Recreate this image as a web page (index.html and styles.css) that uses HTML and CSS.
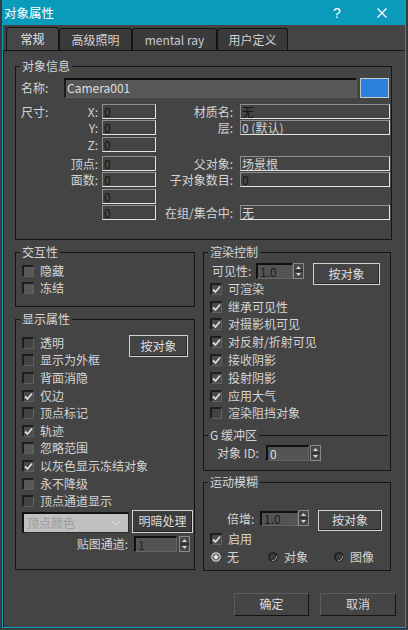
FILE: index.html
```html
<!DOCTYPE html>
<html lang="zh-CN">
<head>
<meta charset="utf-8">
<title>对象属性</title>
<link rel="stylesheet" href="styles.css">
</head>
<body>
<div class="win">
  <div class="titlebar">
    <span class="ttl">对象属性</span>
    <span class="help">?</span>
    <svg class="close" viewBox="0 0 10 10" width="10" height="10"><path d="M0.5 0.5 L9.5 9.5 M9.5 0.5 L0.5 9.5" stroke="#fff" stroke-width="1.3" fill="none"/></svg>
  </div>
  <div class="tabs">
    <div class="tab t1 active">常规</div>
    <div class="tab t2">高级照明</div>
    <div class="tab t3">mental ray</div>
    <div class="tab t4">用户定义</div>
  </div>
  <div class="panel">
    <div class="group g-info">
      <div class="gt">对象信息</div>
      <div class="name-row">
        <span class="nlbl">名称:</span>
        <div class="namebox">Camera001</div>
        <div class="swatch"></div>
      </div>
      <div class="info">
        <div class="l size"><span>尺寸:</span><span>X:</span></div>
        <div class="box">0</div>
        <div class="l r">材质名:</div>
        <div class="box">无</div>

        <div class="l">Y:</div>
        <div class="box">0</div>
        <div class="l r">层:</div>
        <div class="box lt">0 (默认)</div>

        <div class="l">Z:</div>
        <div class="box">0</div>
        <div></div>
        <div></div>

        <div class="l">顶点:</div>
        <div class="box">0</div>
        <div class="l r">父对象:</div>
        <div class="box lt">场景根</div>

        <div class="l">面数:</div>
        <div class="box">0</div>
        <div class="l r">子对象数目:</div>
        <div class="box">0</div>

        <div></div>
        <div class="box">0</div>
        <div></div>
        <div></div>

        <div></div>
        <div class="box">0</div>
        <div class="l r">在组/集合中:</div>
        <div class="box lt">无</div>
      </div>
    </div>

    <div class="cols">
      <div class="colL">
        <div class="group g-inter">
          <div class="gt">交互性</div>
          <div class="rows">
            <div class="cr"><span class="cb"></span><span>隐藏</span></div>
            <div class="cr"><span class="cb"></span><span>冻结</span></div>
          </div>
        </div>

        <div class="group g-disp">
          <div class="gt">显示属性</div>
          <div class="rows">
            <div class="cr"><span class="cb dim"></span><span>透明</span><button class="btn obj1">按对象</button></div>
            <div class="cr"><span class="cb dim"></span><span>显示为外框</span></div>
            <div class="cr"><span class="cb dim"></span><span>背面消隐</span></div>
            <div class="cr"><span class="cb on"><svg viewBox="0 0 9 9" width="9" height="9"><path d="M1 4.5 L3.5 7 L8 1.5" fill="none" stroke="#dcdcdc" stroke-width="1.8"/></svg></span><span>仅边</span></div>
            <div class="cr"><span class="cb dim"></span><span>顶点标记</span></div>
            <div class="cr"><span class="cb on"><svg viewBox="0 0 9 9" width="9" height="9"><path d="M1 4.5 L3.5 7 L8 1.5" fill="none" stroke="#dcdcdc" stroke-width="1.8"/></svg></span><span>轨迹</span></div>
            <div class="cr"><span class="cb"></span><span>忽略范围</span></div>
            <div class="cr"><span class="cb on"><svg viewBox="0 0 9 9" width="9" height="9"><path d="M1 4.5 L3.5 7 L8 1.5" fill="none" stroke="#dcdcdc" stroke-width="1.8"/></svg></span><span>以灰色显示冻结对象</span></div>
            <div class="cr"><span class="cb"></span><span>永不降级</span></div>
            <div class="cr"><span class="cb dim"></span><span>顶点通道显示</span></div>
          </div>
          <div class="ddrow">
            <div class="dd"><span>顶点颜色</span><svg viewBox="0 0 10 6" width="10" height="6"><path d="M1 1 L5 5 L9 1" fill="none" stroke="#e6e6e6" stroke-width="1"/></svg></div>
            <button class="btn shade">明暗处理</button>
          </div>
          <div class="texrow">
            <span class="texlbl">贴图通道:</span>
            <div class="sp tex">1</div>
            <svg class="arr" viewBox="0 0 11 16" width="11" height="16"><rect x="0.5" y="0.5" width="10" height="15" fill="#474747" stroke="#8a8a8a"/><line x1="1" y1="8" x2="10" y2="8" stroke="#1e1e1e"/><path d="M3 6 L5.5 3 L8 6Z" fill="#d4d4d4"/><path d="M3 10 L5.5 13 L8 10Z" fill="#d4d4d4"/></svg>
          </div>
        </div>
      </div>

      <div class="colR">
        <div class="group g-render">
          <div class="gt">渲染控制</div>
          <div class="visrow">
            <span class="vislbl">可见性:</span>
            <div class="sp vis">1.0</div>
            <svg class="arr" viewBox="0 0 11 16" width="11" height="16"><rect x="0.5" y="0.5" width="10" height="15" fill="#474747" stroke="#8a8a8a"/><line x1="1" y1="8" x2="10" y2="8" stroke="#1e1e1e"/><path d="M3 6 L5.5 3 L8 6Z" fill="#d4d4d4"/><path d="M3 10 L5.5 13 L8 10Z" fill="#d4d4d4"/></svg>
            <button class="btn obj2">按对象</button>
          </div>
          <div class="rows">
            <div class="cr tall"><span class="cb on"><svg viewBox="0 0 9 9" width="9" height="9"><path d="M1 4.5 L3.5 7 L8 1.5" fill="none" stroke="#dcdcdc" stroke-width="1.8"/></svg></span><span>可渲染</span></div>
            <div class="cr tall"><span class="cb on"><svg viewBox="0 0 9 9" width="9" height="9"><path d="M1 4.5 L3.5 7 L8 1.5" fill="none" stroke="#dcdcdc" stroke-width="1.8"/></svg></span><span>继承可见性</span></div>
            <div class="cr tall"><span class="cb on"><svg viewBox="0 0 9 9" width="9" height="9"><path d="M1 4.5 L3.5 7 L8 1.5" fill="none" stroke="#dcdcdc" stroke-width="1.8"/></svg></span><span>对摄影机可见</span></div>
            <div class="cr tall"><span class="cb on"><svg viewBox="0 0 9 9" width="9" height="9"><path d="M1 4.5 L3.5 7 L8 1.5" fill="none" stroke="#dcdcdc" stroke-width="1.8"/></svg></span><span>对反射/折射可见</span></div>
            <div class="cr tall"><span class="cb on"><svg viewBox="0 0 9 9" width="9" height="9"><path d="M1 4.5 L3.5 7 L8 1.5" fill="none" stroke="#dcdcdc" stroke-width="1.8"/></svg></span><span>接收阴影</span></div>
            <div class="cr tall"><span class="cb on"><svg viewBox="0 0 9 9" width="9" height="9"><path d="M1 4.5 L3.5 7 L8 1.5" fill="none" stroke="#dcdcdc" stroke-width="1.8"/></svg></span><span>投射阴影</span></div>
            <div class="cr tall"><span class="cb on"><svg viewBox="0 0 9 9" width="9" height="9"><path d="M1 4.5 L3.5 7 L8 1.5" fill="none" stroke="#dcdcdc" stroke-width="1.8"/></svg></span><span>应用大气</span></div>
            <div class="cr tall"><span class="cb dim"></span><span>渲染阻挡对象</span></div>
          </div>
          <div class="gdiv">
            <div class="gt">G 缓冲区</div>
            <div class="idrow">
              <span class="idlbl">对象 ID:</span>
              <div class="sp oid">0</div>
              <svg class="arr" viewBox="0 0 11 16" width="11" height="16"><rect x="0.5" y="0.5" width="10" height="15" fill="#474747" stroke="#8a8a8a"/><line x1="1" y1="8" x2="10" y2="8" stroke="#1e1e1e"/><path d="M3 6 L5.5 3 L8 6Z" fill="#d4d4d4"/><path d="M3 10 L5.5 13 L8 10Z" fill="#d4d4d4"/></svg>
            </div>
          </div>
        </div>

        <div class="group g-motion">
          <div class="gt">运动模糊</div>
          <div class="mulrow">
            <span class="mullbl">倍增:</span>
            <div class="sp mul">1.0</div>
            <svg class="arr" viewBox="0 0 11 16" width="11" height="16"><rect x="0.5" y="0.5" width="10" height="15" fill="#474747" stroke="#8a8a8a"/><line x1="1" y1="8" x2="10" y2="8" stroke="#1e1e1e"/><path d="M3 6 L5.5 3 L8 6Z" fill="#d4d4d4"/><path d="M3 10 L5.5 13 L8 10Z" fill="#d4d4d4"/></svg>
            <button class="btn obj3">按对象</button>
          </div>
          <div class="cr tall"><span class="cb on"><svg viewBox="0 0 9 9" width="9" height="9"><path d="M1 4.5 L3.5 7 L8 1.5" fill="none" stroke="#dcdcdc" stroke-width="1.8"/></svg></span><span>启用</span></div>
          <div class="radrow">
            <div class="ri r1"><svg viewBox="0 0 10 10" width="10" height="10"><circle cx="5" cy="5" r="4.2" fill="#6e6e6e" stroke="#c8c8c8" stroke-width="1.2"/><circle cx="5" cy="5" r="1.9" fill="#f2f2f2"/></svg><span>无</span></div>
            <div class="ri r2"><svg viewBox="0 0 10 10" width="10" height="10"><circle cx="5" cy="5" r="4.2" fill="#3a3a3a" stroke="#1a1a1a" stroke-width="1.3"/><path d="M8.6 3.8 A4 4 0 0 1 3.8 8.6" stroke="#a0a0a0" fill="none" stroke-width="1"/></svg><span>对象</span></div>
            <div class="ri r3"><svg viewBox="0 0 10 10" width="10" height="10"><circle cx="5" cy="5" r="4.2" fill="#3a3a3a" stroke="#1a1a1a" stroke-width="1.3"/><path d="M8.6 3.8 A4 4 0 0 1 3.8 8.6" stroke="#a0a0a0" fill="none" stroke-width="1"/></svg><span>图像</span></div>
          </div>
        </div>
      </div>
    </div>

    <div class="foot">
      <button class="fbtn ok">确定</button>
      <button class="fbtn cancel">取消</button>
    </div>
  </div>
</div>
</body>
</html>
```

FILE: styles.css
```css
* { box-sizing: border-box; }
html, body { margin: 0; padding: 0; }
body {
  background: #3a3a3a;
  width: 408px;
  height: 630px;
  overflow: hidden;
  font-family: "Noto Sans CJK SC", "Noto Sans", sans-serif;
  font-size: 12px;
  color: #d4d4d4;
}

.win {
  margin-left: 2px;
  width: 404px;
  height: 628px;
  background: #444444;
  border: 1px solid #0a9aba;
  border-top: 0;
  display: flex;
  flex-direction: column;
}

.titlebar {
  height: 25px;
  flex: none;
  background: #0a9aba;
  display: flex;
  align-items: center;
  padding: 0 18px 0 1px;
  color: #ffffff;
}
.ttl { font-size: 12.5px; line-height: 14px; }
.help {
  margin-left: auto;
  width: 14px;
  text-align: center;
  font-family: "Liberation Sans", sans-serif;
  font-size: 14px;
  line-height: 16px;
}
.close { margin-left: 33px; display: block; }

.tabs {
  height: 25px;
  flex: none;
  display: flex;
  align-items: flex-end;
  padding-left: 3px;
}
.tab {
  height: 22px;
  border: 1px solid #141414;
  border-bottom: 0;
  border-radius: 3px 3px 0 0;
  background: #3a3a3a;
  display: flex;
  align-items: center;
  justify-content: center;
  color: #d2d2d2;
  line-height: 14px;
}
.tab.active { height: 23px; background: #464646; color: #e6e6e6; }
.t1 { width: 53px; }
.t2 { width: 73px; }
.t3 { width: 85px; color: #c8ccd4; }
.t4 { width: 71px; }

.panel {
  flex: 1;
  border-top: 1px solid #141414;
  border-left: 1px solid #141414;
}

.group { border: 1px solid #151515; }
.gt {
  width: fit-content;
  height: 14px;
  line-height: 14px;
  margin: -8px 0 0 4px;
  padding: 0 2px;
  background: #444444;
  color: #d6d6d6;
}

.g-info { margin: 15px 0 0 11px; width: 377px; padding-bottom: 19px; }
.name-row { display: flex; margin-top: 5px; padding-left: 5px; height: 20px; }
.nlbl { width: 43px; line-height: 20px; }
.namebox {
  width: 293px;
  height: 20px;
  background: #575757;
  border-style: solid;
  border-width: 2px 1px 1px 2px;
  border-color: #0e0e0e #5e5e5e #5e5e5e #1c1c1c;
  padding-left: 1px;
  line-height: 16px;
  color: #dedede;
}
.swatch {
  width: 29px;
  height: 20px;
  margin-left: 3px;
  background: #2b80dc;
  border: 1px solid #c8c8c8;
}

.info {
  display: grid;
  grid-template-columns: 86px 54px 84px 150px;
  grid-template-rows: 16px 17px 19px 16px 17px 16px 15px;
  margin-top: 6px;
}
.l {
  height: 15px;
  display: flex;
  align-items: center;
  justify-content: flex-end;
  padding-right: 4px;
  line-height: 15px;
  white-space: nowrap;
}
.l.r { padding-right: 7px; }
.l.size { justify-content: space-between; padding-left: 5px; }
.box {
  height: 15px;
  border: 1px solid;
  border-color: #8e8e8e #e4e4e4 #e4e4e4 #8e8e8e;
  line-height: 13px;
  padding-left: 1px;
  color: #151515;
  overflow: hidden;
  white-space: nowrap;
}
.box.lt { color: #d2d2d2; }

.cols {
  display: flex;
  gap: 8px;
  margin: 12px 0 0 11px;
  align-items: flex-start;
}
.colL { width: 180px; display: flex; flex-direction: column; }
.colR { width: 188px; display: flex; flex-direction: column; }

.cr {
  height: 17.6px;
  display: flex;
  align-items: center;
  padding-left: 6px;
  line-height: 14px;
  white-space: nowrap;
}
.cr.tall { height: 17.8px; }
.cb {
  width: 12px;
  height: 12px;
  flex: none;
  margin-right: 6px;
  border-style: solid;
  border-width: 2px 1px 1px 2px;
  border-color: #1e1e1e #606060 #606060 #1e1e1e;
  background: #585858;
  display: flex;
  align-items: center;
  justify-content: center;
}
.cb.dim { background: #434343; }
.cb.on { background: #4a4a4a; }
.cb svg { display: block; }

.g-inter { padding-bottom: 8.8px; }
.g-inter .rows { margin-top: 3px; }

.g-disp { margin-top: 12px; padding-bottom: 17px; }
.g-disp .rows { margin-top: 8px; }

.btn {
  font: inherit;
  margin: 0;
  padding: 0;
  background: #444444;
  border: 1px solid #d2d2d2;
  box-shadow: inset -1px -1px 0 #262626;
  color: #dedede;
  display: flex;
  align-items: center;
  justify-content: center;
  line-height: 14px;
}
.obj1 {
  margin-left: auto;
  margin-right: 6px;
  align-self: flex-start;
  margin-top: 1px;
  width: 59px;
  height: 22px;
  flex: none;
}

.ddrow {
  display: flex;
  align-items: flex-end;
  height: 23px;
  padding-left: 6px;
}
.dd {
  width: 107px;
  height: 21px;
  background: #c0c0c0;
  border-style: solid;
  border-width: 2px 1px 1px 2px;
  border-color: #121212 #2a2a2a #2a2a2a #121212;
  color: #9c9c9c;
  display: flex;
  align-items: center;
  justify-content: space-between;
  padding: 0 7px 0 3px;
  line-height: 14px;
}
.dd svg { display: block; }
.shade {
  margin-left: 3px;
  width: 61px;
  height: 23px;
  background: #3c3c3c;
}

.texrow { display: flex; margin-top: 3px; height: 16px; }
.texlbl { width: 112px; text-align: right; line-height: 16px; }
.sp {
  height: 16px;
  background: #545454;
  border-style: solid;
  border-width: 2px 1px 1px 2px;
  border-color: #101010 #646464 #646464 #101010;
  line-height: 13px;
  padding-left: 2px;
  color: #1c1c1c;
}
.tex { margin-left: 6px; width: 43px; color: #1c2230; }
.arr { display: block; flex: none; }
.texrow .arr { margin-left: 2px; }

.g-render { padding-bottom: 9px; }
.visrow {
  display: flex;
  align-items: flex-start;
  margin-top: 4px;
  height: 17px;
  padding-left: 8px;
}
.vislbl { width: 44px; line-height: 16px; }
.vis { width: 37px; }
.obj2 { margin-left: 9px; width: 67px; height: 22px; flex: none; }

.gdiv { margin: 12.6px 2px 0 0; border-top: 1px solid #151515; }
.idrow {
  display: flex;
  margin-top: 3px;
  height: 16px;
  padding-left: 13px;
}
.idlbl { width: 49px; line-height: 16px; }
.oid { width: 43px; color: #dcdcdc; }
.idrow .arr { margin-left: 1px; }

.g-motion { margin-top: 11px; padding-bottom: 4px; }
.mulrow {
  display: flex;
  align-items: flex-start;
  margin-top: 21px;
  height: 20px;
  padding-left: 23px;
}
.mullbl { width: 33px; line-height: 17px; }
.mul { width: 38px; height: 15px; margin-top: 1px; line-height: 12px; }
.obj3 { margin-left: 9px; width: 64px; height: 21px; flex: none; }

.radrow {
  display: flex;
  align-items: center;
  height: 18px;
  padding-left: 7px;
}
.ri { display: flex; align-items: center; gap: 6px; line-height: 14px; }
.ri svg { display: block; flex: none; }
.r1 { width: 57px; }
.r2 { width: 66px; }

.foot {
  display: flex;
  justify-content: flex-end;
  gap: 11px;
  padding-right: 9px;
  margin-top: 22px;
}
.fbtn {
  font: inherit;
  margin: 0;
  padding: 0;
  height: 23px;
  background: #454545;
  border: 1px solid;
  border-color: #5c5c5c #141414 #141414 #5c5c5c;
  color: #dcdcdc;
  line-height: 14px;
}
.ok { width: 75px; }
.cancel { width: 76px; }
```
